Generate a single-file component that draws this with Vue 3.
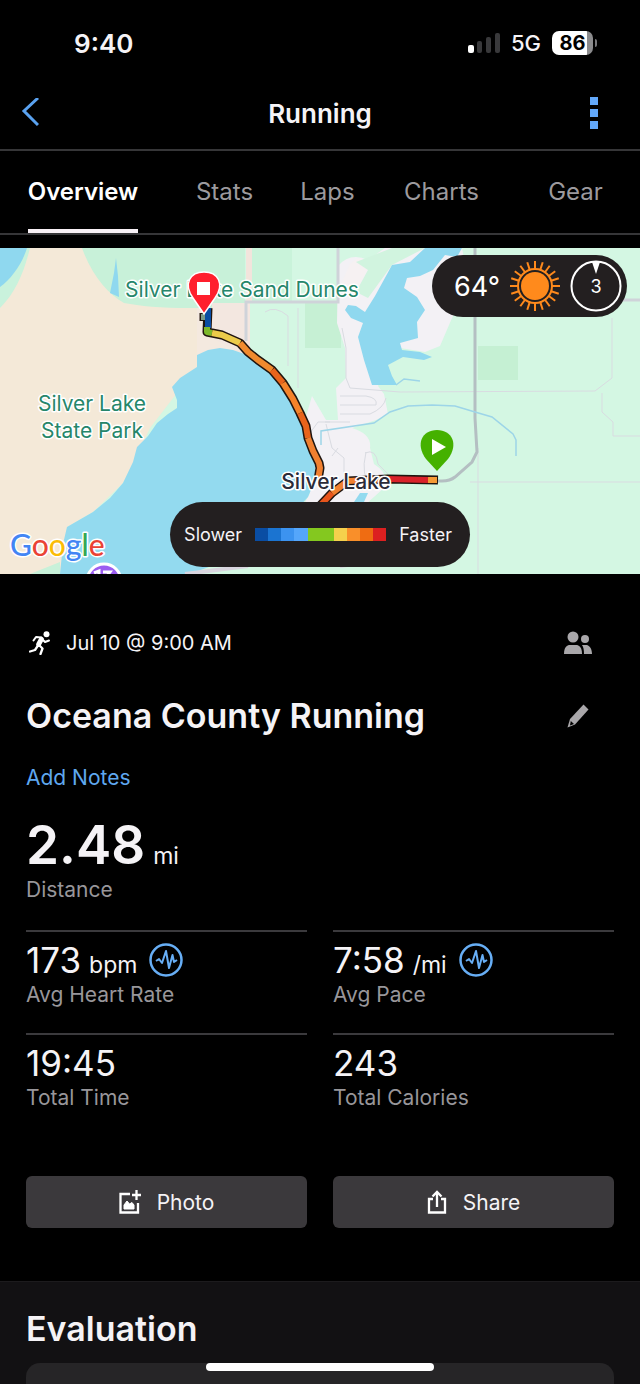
<script setup>
const tabs = ['Overview', 'Stats', 'Laps', 'Charts', 'Gear']
const stats = [
  { value: '173', unit: 'bpm', label: 'Avg Heart Rate', chart: true },
  { value: '7:58', unit: '/mi', label: 'Avg Pace', chart: true },
  { value: '19:45', unit: '', label: 'Total Time', chart: false },
  { value: '243', unit: '', label: 'Total Calories', chart: false },
]
const paceColors = ['#0a4da3', '#1b74d1', '#3c93f0', '#55a6fb', '#84c81f', '#84c81f', '#f5d04c', '#f98f2a', '#ef6c12', '#dc2020']
const rays = Array.from({ length: 20 }, (_, i) => i * 18)
const route = [
  { d: 'M204 66V72', c: '#7d9a86' },
  { d: 'M208 60L208 80', c: '#0a4da3' },
  { d: 'M207 79L207 84L212 85', c: '#7cb82a' },
  { d: 'M212 85L222 87L240 95', c: '#eccb4a' },
  { d: 'M240 95L248 104L258 112L272 122', c: '#f08a2e' },
  { d: 'M272 122L283 135', c: '#e8641c' },
  { d: 'M283 135L293 151L300 165', c: '#f4832a' },
  { d: 'M300 165L306 178L308 190', c: '#e8641c' },
  { d: 'M308 190L313 203L319 215L320 220L318 232', c: '#f08030' },
  { d: 'M437 232L428 232', c: '#f59a35' },
  { d: 'M428 232L388 231', c: '#d9222a' },
  { d: 'M388 231L348 233L332 245', c: '#f08030' },
  { d: 'M332 245L316 262', c: '#e8551c' },
]
const routeOutline = 'M204 65V73M208 60L207 84L222 87L240 95L248 104L258 112L272 122L283 135L293 151L300 165L306 178L308 190L313 203L319 215L320 220L318 232M438 232L388 231L348 233L332 245L316 262'
</script>

<template>
  <div class="screen">
    <div class="status">
      <span class="clock">9:40</span>
      <div class="status-right">
        <svg class="signal" width="32" height="20" viewBox="0 0 32 20" aria-hidden="true">
          <rect x="0" y="12" width="6" height="8" rx="2" fill="#fff" />
          <rect x="9" y="8" width="5" height="12" rx="2" fill="#39393b" />
          <rect x="18" y="4" width="5" height="16" rx="2" fill="#39393b" />
          <rect x="27" y="0" width="5" height="20" rx="2" fill="#39393b" />
        </svg>
        <span class="network">5G</span>
        <span class="battery">86</span>
      </div>
    </div>

    <header class="bar">
      <button class="icon-btn" aria-label="Back">
        <svg width="18" height="30" viewBox="0 0 18 30"><path d="M17 0L3 13L17 27" fill="none" stroke="#5aa2f0" stroke-width="3" /></svg>
      </button>
      <h1>Running</h1>
      <button class="icon-btn menu" aria-label="More options">
        <svg width="8" height="32" viewBox="0 0 8 32" fill="#62a8fa"><rect width="8" height="8" y="0" /><rect width="8" height="8" y="12" /><rect width="8" height="8" y="24" /></svg>
      </button>
    </header>

    <nav class="tabs">
      <button v-for="(t, i) in tabs" :key="t" :class="{ active: i === 0 }"><span>{{ t }}</span></button>
    </nav>

    <div class="map">
      <svg class="map-art" viewBox="0 0 640 326" preserveAspectRatio="xMidYMid slice" role="img" aria-label="Route map">
        <rect width="640" height="326" fill="#d4f7e3" />
        <path d="M0 0H245V110L197 119L150 180L136 210L123 235L93 264L67 279L60 326H0Z" fill="#f4e9d8" />
        <path d="M0 0H30C24 24 16 44 0 60Z" fill="#c9f2dc" />
        <path d="M0 0H27C22 16 12 30 0 39Z" fill="#8fd8ef" />
        <path d="M82 0H245V60H190C160 60 140 58 124 55C108 46 92 28 82 0Z" fill="#c8f1d9" />
        <path d="M116 10L118 28L119 49L110 45L114 25Z" fill="#8fd8ef" />
        <path d="M197 60H247V126L197 110Z" fill="#f4e9df" />
        <path d="M212 55H250V110L212 90Z" fill="#f3e7e0" />
        <path d="M246 0H252V54H246Z" fill="#f2e4dc" />
        <path d="M252 0H292V54H252Z" fill="#c9f3da" />
        <path d="M305 55H341V100H305Z" fill="#c6f0d4" />
        <path d="M30 326L60 314V326Z" fill="#c8f1d9" />
        <path d="M338 18Q350 4 368 12L385 0H462L470 40L452 70L440 98L425 104L400 100L388 112L378 138L384 146L388 166L376 172L352 180Q372 186 370 200L374 216Q390 226 384 240L356 265L318 270L300 264L310 245L305 172L312 148L326 172L338 172L336 140L346 130L345 100L337 75Z" fill="#f3f1f5" />
        <path d="M350 16Q364 4 368 20L358 40L350 52L342 34Z" fill="#f6f1f2" />
        <path d="M356 14L392 0H425L392 17L368 50L356 44L368 22Z" fill="#d1f4df" />
        <path d="M388 117L403 109L424 112L440 100L470 80V136H397Z" fill="#d4f7e3" />
        <path d="M197 107L208 102L220 100L233 102L247 107L262 114L280 132L296 165L306 190L315 212L315 232L308 249L296 262L260 300L190 326H60L63 296L67 279L93 264L110 250L123 235L133 214L137 199L148 188L157 175L168 166L177 160L177 152L172 139L180 130L197 119Z" fill="#93daef" />
        <path d="M425 0H462L457 9L445 7L433 22L420 28L407 30L404 40L417 49L425 62L417 74L418 90L400 95L402 102L420 104L432 109L424 112L403 109L388 117L392 128L397 137L372 137L364 112L358 89L363 75L351 70L345 62L348 57L356 58L365 64L375 48L386 28L392 17L410 14Z" fill="#8fd8ef" />
        <path d="M354 254L360 245L368 245L364 254Z" fill="#93daef" />
        <rect x="478" y="98" width="40" height="34" fill="#c5f0d3" />
        <g fill="none" stroke="#d9dbe1" stroke-width="1">
          <path d="M265 64Q275 57 288 68V118M298 60V140M342 80L346 100L346 130L350 140L400 144L595 143L612 130V70M602 145V164L613 174V188H640M470 234H640M478 200V326M340 148H366Q378 150 376 157H340M340 166H370Q384 160 386 150M325 174H350M365 205Q376 200 378 216L388 226M310 185L318 174H330M326 176L332 200L344 210V240M366 204Q360 230 372 236M332 208L338 200" />
        </g>
        <path d="M338 0V54H246V93M520 52H640" fill="none" stroke="#cfd3d9" stroke-width="3" />
        <path d="M185 326L248 318M340 318L400 310" fill="none" stroke="#d9d5df" stroke-width="4" />
        <path d="M475 0V170L477 204L472 214L455 229Q450 233 442 233H434" fill="none" stroke="#b4bfc2" stroke-width="3" />
        <path d="M321 197V183L374 175L390 164L396 162L408 158L432 157L455 158L475 164L492 169L513 186L516 192V208M396 137L404 131L420 133" fill="none" stroke="#9dd5e8" stroke-width="1.5" />

        <path :d="routeOutline" fill="none" stroke="#20150f" stroke-width="9" stroke-linejoin="round" />
        <path v-for="s in route" :key="s.d" :d="s.d" :stroke="s.c" fill="none" stroke-width="6" stroke-linejoin="round" />

        <g class="park">
          <text x="242" y="49" text-anchor="middle">Silver Lake Sand Dunes</text>
          <text x="92" y="163" text-anchor="middle">Silver Lake</text>
          <text x="92" y="190" text-anchor="middle">State Park</text>
        </g>
        <text class="town" x="336" y="241" text-anchor="middle">Silver Lake</text>
        <text class="google" x="10" y="308"><tspan fill="#4285f4">G</tspan><tspan fill="#ea4335">o</tspan><tspan fill="#fbbc05">o</tspan><tspan fill="#4285f4">g</tspan><tspan fill="#34a853">l</tspan><tspan fill="#ea4335">e</tspan></text>

        <circle cx="104" cy="333" r="17" fill="#9b5cf0" stroke="#fff" stroke-width="3" />
        <path d="M94 325L99 323V328M103 324H110L107 328" fill="none" stroke="#fff" stroke-width="3" />

        <path d="M204 66L193 50C183 36 190 24 204 24C218 24 225 36 215 50Z" fill="#ff1f2d" stroke="#fff" stroke-width="1.5" />
        <rect x="197" y="34" width="13" height="13" fill="#fff" />
        <path d="M437 223L426 211C415 196 422 182 437 182C452 182 459 196 448 211Z" fill="#45b100" />
        <path d="M432 191L446 199L432 207Z" fill="#fff" />
      </svg>

      <div class="weather">
        <span>64°</span>
        <svg width="52" height="52" viewBox="-26 -26 52 52" aria-hidden="true">
          <g stroke="#ff8a1c" stroke-width="2"><path v-for="r in rays" :key="r" d="M0 -17V-25" :transform="`rotate(${r})`" /></g>
          <circle r="17" fill="#231f20" stroke="#ff8a1c" stroke-width="2" />
          <circle r="14" fill="#ff8a1c" />
        </svg>
        <span class="wind">
          <svg width="52" height="52" viewBox="0 0 52 52" aria-hidden="true"><circle cx="26" cy="26" r="24.5" fill="none" stroke="#fff" stroke-width="2" /><path d="M22 2H30L26 14Z" fill="#fff" /></svg>
          <b>3</b>
        </span>
      </div>

      <div class="legend">
        <span>Slower</span>
        <div class="scale"><i v-for="(c, i) in paceColors" :key="i" :style="{ background: c }"></i></div>
        <span>Faster</span>
      </div>
    </div>

    <main class="info">
      <div class="row meta">
        <svg width="22" height="24" viewBox="0 0 22 24" aria-hidden="true">
          <circle cx="17.500" cy="3.200" r="3" fill="#fff" />
          <g fill="none" stroke="#fff" stroke-linejoin="round" stroke-linecap="round">
            <path d="M12.500 8L9.500 13.500" stroke-width="4.800" />
            <path d="M12 6.500L7 6L4.500 9.500M13 8L16 11L20 9.500" stroke-width="2" />
            <path d="M10 14L13.500 17.500L11.500 23M9 14.500L6 19L1 20.500" stroke-width="2.300" />
          </g>
        </svg>
        <span class="date">Jul 10 @ 9:00 AM</span>
        <button class="icon-btn" aria-label="Participants">
          <svg width="28" height="24" viewBox="0 0 28 24" fill="#a9a7aa"><circle cx="9" cy="6" r="5.500" /><circle cx="21" cy="8" r="4" /><path d="M0 23C0 16 3 14 6 14H12C15 14 18 16 18 23Z" /><path d="M18 14H23C26 15 28 18 28 23H20C20 19 19.500 16 18 14Z" /></svg>
        </button>
      </div>
      <div class="row title">
        <h2>Oceana County Running</h2>
        <button class="icon-btn" aria-label="Edit name">
          <svg width="22" height="24" viewBox="0 0 22 24"><path d="M16.500 0.500L21.500 5.500L8 20.500L0.500 23.500L3 15Z" fill="#a9a7aa" /><path d="M3.800 17L7 20L3 21.500Z" fill="#000" /></svg>
        </button>
      </div>
      <a href="#notes" class="notes">Add Notes</a>
      <div class="distance"><strong>2.48</strong><span>mi</span></div>
      <div class="label">Distance</div>

      <div class="grid">
        <div v-for="s in stats" :key="s.label" class="stat">
          <div class="value">
            <span>{{ s.value }}</span>
            <small v-if="s.unit">{{ s.unit }}</small>
            <button v-if="s.chart" class="icon-btn pulse" :aria-label="`${s.label} chart`">
              <svg width="34" height="34" viewBox="0 0 34 34" fill="none" stroke="#67aef5"><circle cx="17" cy="17" r="15.500" stroke-width="2.500" /><path d="M7 18L10 16L13 20L17 8L20 25L23.500 12L25 19L28 17" stroke-width="2" stroke-linejoin="round" /></svg>
            </button>
          </div>
          <div class="label">{{ s.label }}</div>
        </div>
      </div>

      <div class="actions">
        <button>
          <svg width="22" height="24" viewBox="0 0 22 24" fill="none" stroke="#fff"><path d="M11 4H1.500V22.500H19V13" stroke-width="2.300" /><path d="M17.500 0V10M13 5H22" stroke-width="2.300" /><path d="M5 19V15L8 11L10.500 14L13 12.500L15 15V19Z" fill="#fff" stroke-width="1" /></svg>
          Photo
        </button>
        <button>
          <svg width="20" height="24" viewBox="0 0 20 24" fill="none" stroke="#fff" stroke-width="2.300"><path d="M6 9H2V22.500H18V9H14M10 17V3" /><path d="M5.500 6.500L10 2L14.500 6.500" /></svg>
          Share
        </button>
      </div>
    </main>

    <section class="evaluation">
      <h2>Evaluation</h2>
      <div class="card"></div>
    </section>
    <div class="home"></div>
  </div>
</template>

<style>
body { background: #000; }
</style>

<style scoped>
.screen { min-height: 100vh; display: flex; flex-direction: column; background: #000; color: #f5f3f6; font-family: Inter, "Liberation Sans", sans-serif; overflow: hidden; }
button { font: inherit; color: inherit; background: none; border: 0; padding: 0; cursor: pointer; }
h1, h2 { margin: 0; font-weight: 600; }
svg { display: block; flex: none; }
.status { height: 86px; padding: 0 47px 0 74px; display: flex; align-items: center; justify-content: space-between; }
.clock { font-size: 26px; font-weight: 600; }
.status-right { display: flex; align-items: center; gap: 11px; }
.network { font-size: 22px; font-weight: 500; }
.battery { position: relative; width: 41px; height: 24px; border-radius: 7px; background: linear-gradient(90deg, #fff 86%, #8b8b8d 86%); color: #000; font-size: 20px; font-weight: 700; line-height: 24px; text-align: center; }
.battery::after { content: ""; position: absolute; right: -4px; top: 8px; width: 2px; height: 8px; border-radius: 0 3px 3px 0; background: #77777a; }
.bar { height: 65px; padding: 0 42px 10px 21px; box-sizing: border-box; display: flex; align-items: center; justify-content: space-between; border-bottom: 2px solid #363638; }
.bar h1 { flex: 1; padding: 2px 0 0 11px; font-size: 26px; line-height: 32px; text-align: center; }
.icon-btn { display: inline-flex; justify-content: flex-start; }
.tabs { height: 84px; box-sizing: border-box; border-bottom: 2px solid #363638; display: grid; grid-template-columns: 166fr 117fr 89fr 139fr 129fr; }
.tabs button { display: flex; justify-content: center; font-size: 24px; line-height: 82px; color: #9c9a9e; }
.tabs .active { color: #fff; font-weight: 600; }
.tabs .active span { box-shadow: inset 0 -4px #f7f0f5; }
.map { position: relative; margin-top: 13px; }
.map-art { width: 100%; height: 326px; }
.map text { stroke: #fff; stroke-width: 3px; paint-order: stroke; stroke-linejoin: round; }
.park text { font-size: 21px; fill: #26866a; }
.map .town { font-size: 21px; fill: #2b2b38; font-weight: 500; }
.map .google { font-family: Lato, sans-serif; font-size: 30px; font-weight: 500; }
.weather { position: absolute; top: 7px; right: 13px; height: 62px; padding: 0 5px 0 22px; box-sizing: border-box; border-radius: 31px; background: #231f20; display: flex; align-items: center; gap: 9px; color: #fff; font-size: 27px; }
.wind { display: grid; place-items: center; }
.wind > * { grid-area: 1 / 1; }
.wind b { font-size: 18px; font-weight: 400; }
.legend { position: absolute; left: 50%; bottom: 7px; transform: translateX(-50%); width: 300px; height: 65px; box-sizing: border-box; padding-right: 4px; border-radius: 33px; background: #231f20; display: flex; align-items: center; justify-content: center; gap: 13px; font-size: 18px; }
.scale { display: flex; width: 131px; height: 13px; }
.scale i { flex: 1; }
.info { padding: 49px 26px 53px; display: flex; flex-direction: column; }
.row { display: flex; align-items: center; }
.row .icon-btn { margin-left: auto; margin-right: 22px; }
.meta { height: 40px; padding-left: 3px; gap: 15px; font-size: 20px; }
.title { margin-top: 31px; }
.title h2, .evaluation h2 { font-size: 34px; line-height: 44px; }
.title .icon-btn { margin-right: 25px; }
.notes { margin-top: 27px; align-self: flex-start; font-size: 21px; line-height: 26px; color: #5fa8f0; text-decoration: none; }
.distance { margin-top: 26px; height: 56px; display: flex; align-items: baseline; gap: 8px; font-size: 23px; line-height: 56px; }
.distance strong { font-size: 53px; font-weight: 600; }
.label { font-size: 21px; line-height: 26px; color: #98969a; margin-top: 4px; }
.grid { margin-top: 27px; display: grid; grid-template-columns: 1fr 1fr; column-gap: 26px; }
.stat { border-top: 2px solid #3b3a3d; padding: 8px 0 25px; }
.stat .label { margin-top: 2px; }
.value { height: 40px; display: flex; align-items: baseline; gap: 8px; font-size: 35px; line-height: 40px; }
.value small { font-size: 23px; }
.pulse { align-self: center; margin-left: 4px; }
.actions { margin-top: 40px; display: grid; grid-template-columns: 1fr 1fr; gap: 26px; }
.actions button { height: 52px; border-radius: 6px; background: #3b393c; display: flex; align-items: center; justify-content: center; gap: 16px; font-size: 21px; }
.evaluation { flex: 1; display: flex; flex-direction: column; background: #121113; border-top: 1px solid #1c1b1d; padding: 25px 26px 0; }
.card { flex: 1; min-height: 21px; margin-top: 12px; border-radius: 14px 14px 0 0; background: #262527; }
.home { position: fixed; left: 50%; bottom: 13px; transform: translateX(-50%); width: 228px; height: 8px; border-radius: 4px; background: #fff; }
</style>
